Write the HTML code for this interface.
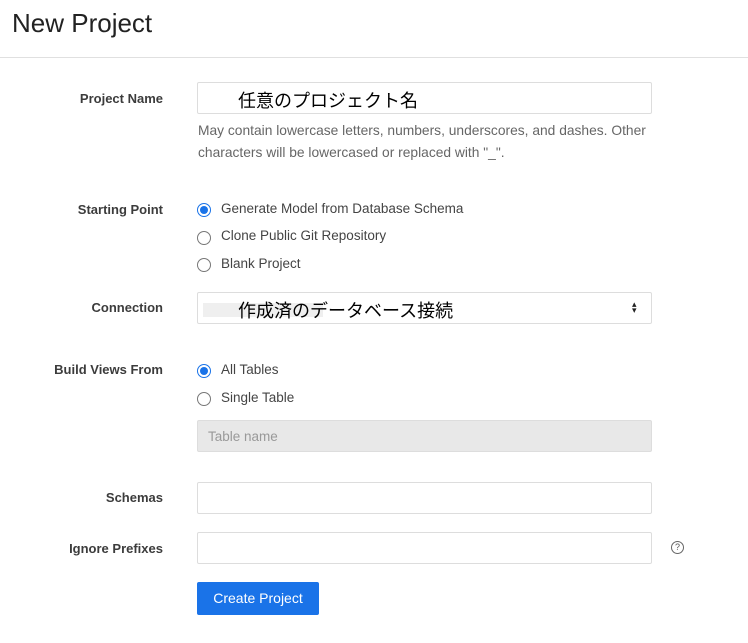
<!DOCTYPE html>
<html><head><meta charset="utf-8"><style>
body{margin:0;width:748px;height:643px;background:#fff;font-family:"Liberation Sans",Arial,sans-serif;position:relative;overflow:hidden}
.a{position:absolute}
.lbl{position:absolute;right:585px;font-size:13px;font-weight:bold;color:#3c3c3c;white-space:nowrap}
.inp{position:absolute;left:197px;width:453px;height:30px;border:1px solid #ddd;border-radius:2px;background:#fff}
.r{position:absolute;left:197px;width:12px;height:12px;border:1.5px solid #777;border-radius:50%}
.r.on{border-color:#1a73e8}
.r.on:after{content:"";position:absolute;left:2px;top:2px;width:8px;height:8px;border-radius:50%;background:#1a73e8}
.rt{position:absolute;left:221px;font-size:13.5px;color:#444}
.jp{font-family:"Liberation Sans","Noto Sans CJK JP",sans-serif;font-size:18px;color:#000;position:absolute;left:238px}
</style></head><body>
<div class="a" style="left:12px;top:8px;font-size:26px;color:#222">New Project</div>
<div class="a" style="left:0;top:57px;width:748px;height:1px;background:#e0e0e0"></div>

<div class="lbl" style="top:91px">Project Name</div>
<div class="inp" style="top:82px"></div>
<div class="jp" style="top:87px">任意のプロジェクト名</div>
<div class="a" style="left:198px;top:120px;font-size:13.8px;color:#666;line-height:22px;width:470px">May contain lowercase letters, numbers, underscores, and dashes. Other characters will be lowercased or replaced with "_".</div>

<div class="lbl" style="top:202px">Starting Point</div>
<div class="r on" style="top:203px"></div><div class="rt" style="top:201px">Generate Model from Database Schema</div>
<div class="r" style="top:231px"></div><div class="rt" style="top:228px">Clone Public Git Repository</div>
<div class="r" style="top:258px"></div><div class="rt" style="top:256px">Blank Project</div>

<div class="lbl" style="top:300px">Connection</div>
<div class="inp" style="top:292px"></div>
<div class="a" style="left:203px;top:303px;width:120px;height:14px;background:#efefef"></div>
<div class="jp" style="top:297px">作成済のデータベース接続</div>
<div class="a" style="left:632px;top:301px;font-size:9px;color:#222;line-height:6px">▴<br>▾</div>

<div class="lbl" style="top:362px">Build Views From</div>
<div class="r on" style="top:364px"></div><div class="rt" style="top:362px">All Tables</div>
<div class="r" style="top:392px"></div><div class="rt" style="top:390px">Single Table</div>
<div class="inp" style="top:420px;background:#e8e8e8"></div>
<div class="a" style="left:208px;top:429px;font-size:13.5px;color:#999">Table name</div>

<div class="lbl" style="top:490px">Schemas</div>
<div class="inp" style="top:482px"></div>
<div class="lbl" style="top:541px">Ignore Prefixes</div>
<div class="inp" style="top:532px"></div>
<div class="a" style="left:671px;top:541px;width:11px;height:11px;border:1px solid #666;border-radius:50%;font-size:9px;line-height:11px;text-align:center;color:#555">?</div>

<div class="a" style="left:197px;top:582px;width:122px;height:33px;background:#1a73e8;border-radius:2px;color:#fff;font-size:14px;line-height:33px;text-align:center">Create Project</div>
</body></html>
